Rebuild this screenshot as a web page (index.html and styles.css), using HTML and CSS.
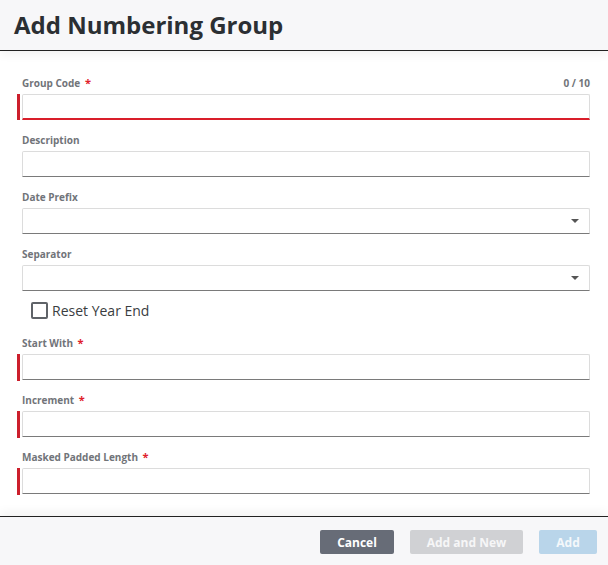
FILE: index.html
```html
<!DOCTYPE html>
<html>
<head>
<meta charset="utf-8">
<link rel="stylesheet" href="styles.css">
</head>
<body>
<div class="dialog">
  <header class="head">
    <h1 class="title">Add Numbering Group</h1>
  </header>
  <main class="body">
    <div class="field required invalid">
      <div class="label-row"><label class="label">Group Code <span class="star">*</span></label><span class="count">0 / 10</span></div>
      <div class="input"></div>
    </div>
    <div class="field">
      <div class="label-row"><label class="label">Description</label></div>
      <div class="input"></div>
    </div>
    <div class="field">
      <div class="label-row"><label class="label">Date Prefix</label></div>
      <div class="input select"><span class="caret"></span></div>
    </div>
    <div class="field">
      <div class="label-row"><label class="label">Separator</label></div>
      <div class="input select"><span class="caret"></span></div>
    </div>
    <div class="check-row">
      <span class="box"></span><span class="check-label">Reset Year End</span>
    </div>
    <div class="field required">
      <div class="label-row"><label class="label">Start With <span class="star">*</span></label></div>
      <div class="input"></div>
    </div>
    <div class="field required">
      <div class="label-row"><label class="label">Increment <span class="star">*</span></label></div>
      <div class="input"></div>
    </div>
    <div class="field required">
      <div class="label-row"><label class="label">Masked Padded Length <span class="star">*</span></label></div>
      <div class="input"></div>
    </div>
  </main>
  <footer class="foot">
    <button class="btn cancel">Cancel</button>
    <button class="btn addnew">Add and New</button>
    <button class="btn add">Add</button>
  </footer>
</div>
</body>
</html>
```
FILE: styles.css
```css
* { box-sizing: border-box; }
html, body { margin: 0; padding: 0; background: #fff; }
body { font-family: "Open Sans", "Noto Sans", sans-serif; width: 608px; height: 565px; overflow: hidden; }
.dialog { display: flex; flex-direction: column; height: 565px; }
.head {
  height: 51px;
  background: #f7f7f9;
  border-bottom: 1.5px solid #222;
  padding: 8px 14px 0;
  box-shadow: 0 3px 10px rgba(0,0,0,0.06);
  position: relative;
  z-index: 1;
}
.title { margin: 0; font-size: 24px; font-weight: 700; color: #2b2f33; line-height: 34px; letter-spacing: 0; }
.body { flex: 1; padding: 22px 18px 0 17px; }
.field { margin-bottom: 0; }
.label-row { display: flex; justify-content: space-between; align-items: center; height: 21px; padding-left: 5px; padding-bottom: 2px; }
.label { font-size: 10px; font-weight: 700; color: #717479; }
.star { color: #e0202a; font-size: 11px; margin-left: 2px; }
.count { font-size: 10px; font-weight: 700; color: #717479; }
.field .input {
  position: relative;
  height: 26px;
  margin-left: 5px;
  border: 1px solid #dcdcdc;
  border-bottom: 1.5px solid #7a7a7a;
  border-radius: 2px 2px 0 0;
  background: #fff;
  margin-bottom: 10px;
}
.field.required .input::before {
  content: "";
  position: absolute;
  left: -6px; top: -1px; bottom: -2px;
  width: 3px;
  background: #cc1f2c;
}
.field.invalid .input { border-bottom: 2px solid #d91e2a; }
.select .caret {
  position: absolute;
  right: 10px; top: 10px;
  width: 0; height: 0;
  border-left: 4px solid transparent;
  border-right: 4px solid transparent;
  border-top: 4px solid #555;
}
.check-row { display: flex; align-items: center; height: 20px; margin: -1px 0 13px 14px; }
.box { width: 17px; height: 17px; border: 2px solid #5f6368; border-radius: 2px; display: inline-block; }
.check-label { font-size: 14px; color: #3a3d41; margin-left: 4px; }
.foot {
  height: 49px;
  background: #f7f7f9;
  border-top: 1.5px solid #222;
  display: flex;
  justify-content: flex-end;
  align-items: center;
  gap: 16px;
  padding: 2px 11px 0 0;
  box-shadow: 0 -4px 10px rgba(0,0,0,0.05);
}
.btn { border: none; border-radius: 2px; height: 24px; font-family: "Open Sans", sans-serif; font-size: 12px; font-weight: 700; color: #fff; padding: 0; }
.cancel { width: 74px; background: #676c77; }
.addnew { width: 113px; background: #d0d1d4; color: #f6f6f7; }
.add { width: 58px; background: #b9d5ea; color: #f4f8fb; }
```
